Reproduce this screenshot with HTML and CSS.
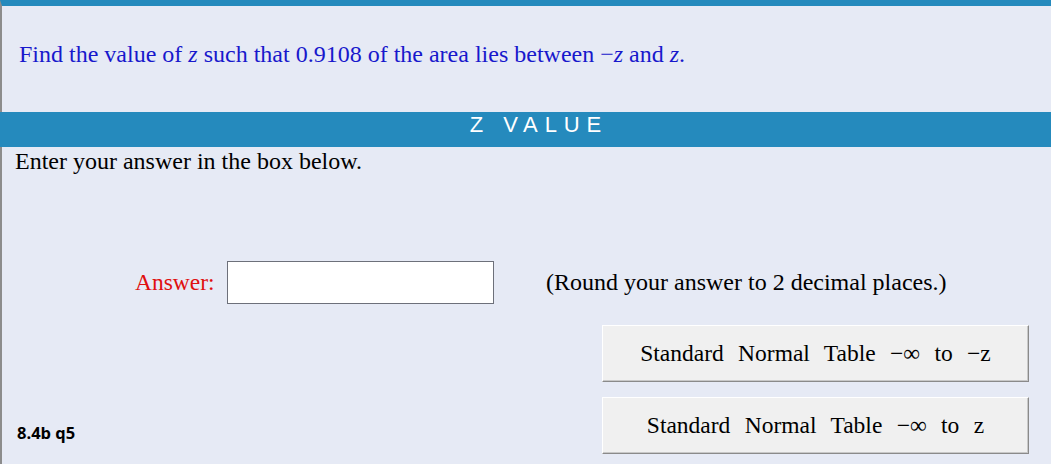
FILE: index.html
```html
<!DOCTYPE html>
<html lang="en">
<head>
<meta charset="utf-8">
<title>Z Value</title>
<link rel="stylesheet" href="styles.css">
</head>
<body>
<div class="page">
  <div class="question">
    <p>Find the value of <i>z</i> such that 0.9108 of the area lies between &minus;<i>z</i> and <i>z</i>.</p>
  </div>
  <div class="bar">Z VALUE</div>
  <p class="instructions">Enter your answer in the box below.</p>
  <div class="answer-row">
    <label class="answer-label" for="ans">Answer:</label>
    <input class="answer-box" id="ans" type="text">
    <span class="round-note">(Round your answer to 2 decimal places.)</span>
  </div>
  <div class="table-row">
    <button class="table-btn" type="button">Standard Normal Table &minus;&infin; to &minus;z</button>
  </div>
  <div class="table-row split">
    <span class="code">8.4b q5</span>
    <button class="table-btn second" type="button">Standard Normal Table &minus;&infin; to z</button>
  </div>
</div>
</body>
</html>
```
FILE: styles.css
```css
html, body {
  margin: 0;
  padding: 0;
  background: #e6eaf5;
}

.page {
  box-sizing: border-box;
  height: 464px;
  border-top: 6px solid #258abd;
  border-left: 2px solid #8c8c8c;
  font-family: "Liberation Serif", "Times New Roman", serif;
}

.question {
  height: 106px;
  display: flex;
  align-items: center;
  padding-left: 17px;
}

.question p {
  margin: 0;
  color: #1818cc;
  font-size: 24px;
  position: relative;
  top: -5px;
}

.bar {
  height: 35px;
  margin-left: -2px;
  background: #258abd;
  color: #ffffff;
  font-family: "Liberation Sans", Arial, sans-serif;
  font-size: 22px;
  letter-spacing: 6.9px;
  line-height: 25px;
  text-align: center;
  padding-left: 27px;
}

.instructions {
  margin: 0;
  padding-left: 13px;
  font-size: 24px;
  line-height: 28px;
  color: #000;
}

.answer-row {
  display: flex;
  align-items: center;
  margin-top: 86px;
  height: 43px;
}

.answer-label {
  margin-left: 133px;
  width: 92px;
  color: #e01010;
  font-size: 23.5px;
}

.answer-box {
  box-sizing: border-box;
  width: 267px;
  height: 43px;
  margin: 0;
  border: 1px solid #6d707a;
  background: #ffffff;
  border-radius: 0;
}

.round-note {
  margin-left: 52px;
  font-size: 24px;
  color: #000;
}

.table-row {
  display: flex;
  justify-content: flex-end;
  padding-right: 22px;
  margin-top: 21px;
}

.table-row.split {
  justify-content: space-between;
  align-items: center;
  margin-top: 15px;
  padding-left: 15px;
}

.code {
  font-family: "Open Sans", "Noto Sans", sans-serif;
  font-weight: 700;
  font-size: 16.5px;
  color: #000;
  position: relative;
  top: 7px;
}

.table-btn {
  box-sizing: border-box;
  width: 427px;
  height: 57px;
  margin: 0;
  padding: 0;
  background: #f0f0f0;
  border: 1px solid;
  border-color: #ffffff #8a8a8a #8a8a8a #ffffff;
  box-shadow: inset -1px -1px 0 #c8c8c8;
  font-family: "Liberation Serif", "Times New Roman", serif;
  font-size: 23.5px;
  word-spacing: 8.5px;
  color: #000;
  border-radius: 0;
}
```
